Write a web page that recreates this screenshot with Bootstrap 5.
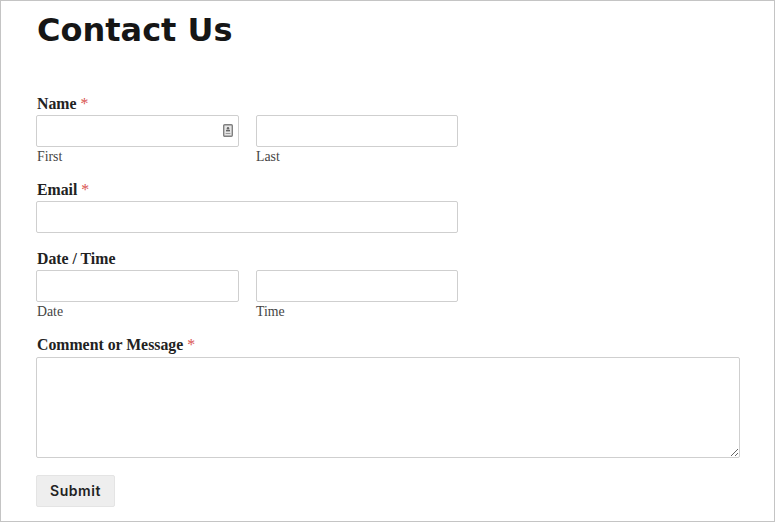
<!DOCTYPE html>
<html lang="en">
<head>
<meta charset="utf-8">
<title>Contact Us</title>
<link rel="stylesheet" href="https://cdn.jsdelivr.net/npm/bootstrap@5.3.0/dist/css/bootstrap.min.css">
<style>
html,body{height:522px;overflow:hidden;background:#fff}
body{font-family:"Liberation Serif","DejaVu Serif",serif;color:#1a1a1a}
.frame{height:522px;border:1px solid #c4c4c4;padding:0 34px 0 35px;overflow:hidden}
.page-title{font-family:"DejaVu Sans","Liberation Sans",sans-serif;font-weight:700;font-size:32px;line-height:40px;margin:9px 0 44px 1px;color:#161616}
.fld-label{display:block;font-weight:700;font-size:15.8px;line-height:20px;margin:0 0 1px;padding-left:1px;color:#222}
.fld-label-up{margin-bottom:2px}
.req{color:#d9534f;font-weight:400}
.half-grid{display:grid;grid-template-columns:203px 202px;column-gap:17px;width:422px}
.fld-wrap{position:relative}
.fld{display:block;width:100%;height:32px;border:1px solid #cfcfcf;border-radius:2px;background:#fff;padding:4px 8px;box-shadow:none}
.fld-wide{width:422px}
.fld-area{width:704px;height:101px;resize:vertical}
.sub-label{display:block;font-size:13.8px;line-height:15px;margin-top:2px;color:#444}
.first-col{padding-left:1px}
.grp{margin-bottom:16px}
.grp-b{margin-bottom:16px}
.grp-c{margin-bottom:17px}
.contact-ico{position:absolute;right:6px;top:9px;width:10px;height:13px}
.send{font-family:Inter,"Liberation Sans",sans-serif;font-weight:600;font-size:14px;letter-spacing:.55px;background:#eee;color:#222;border:1px solid #e4e4e4;border-radius:2px;width:79px;height:32px;padding:0 0 2px;display:block}
</style>
</head>
<body>
<div class="frame">
  <h1 class="page-title">Contact Us</h1>
  <form>
    <div class="grp">
      <label class="fld-label">Name <span class="req">*</span></label>
      <div class="half-grid">
        <div>
          <div class="fld-wrap">
            <input class="form-control fld" type="text" aria-label="First">
            <svg class="contact-ico" viewBox="0 0 10 13" aria-hidden="true"><rect x=".7" y=".7" width="8.6" height="11.6" rx="1" fill="#e6e6e6" stroke="#808080" stroke-width="1.4"/><circle cx="5" cy="4.2" r="1.2" fill="#666"/><rect x="3" y="5.8" width="4" height="1.6" fill="#666"/><rect x="2.6" y="9" width="4.8" height="1" fill="#999"/></svg>
          </div>
          <span class="sub-label first-col">First</span>
        </div>
        <div>
          <input class="form-control fld" type="text" aria-label="Last">
          <span class="sub-label">Last</span>
        </div>
      </div>
    </div>
    <div class="grp-b">
      <label class="fld-label">Email <span class="req">*</span></label>
      <input class="form-control fld fld-wide" type="text" aria-label="Email">
    </div>
    <div class="grp">
      <label class="fld-label">Date / Time</label>
      <div class="half-grid">
        <div>
          <input class="form-control fld" type="text" aria-label="Date">
          <span class="sub-label first-col">Date</span>
        </div>
        <div>
          <input class="form-control fld" type="text" aria-label="Time">
          <span class="sub-label">Time</span>
        </div>
      </div>
    </div>
    <div class="grp-c">
      <label class="fld-label fld-label-up">Comment or Message <span class="req">*</span></label>
      <textarea class="form-control fld fld-area" aria-label="Comment or Message"></textarea>
    </div>
    <button type="button" class="btn send">Submit</button>
  </form>
</div>
<script src="https://cdn.jsdelivr.net/npm/bootstrap@5.3.0/dist/js/bootstrap.bundle.min.js"></script>
</body>
</html>
